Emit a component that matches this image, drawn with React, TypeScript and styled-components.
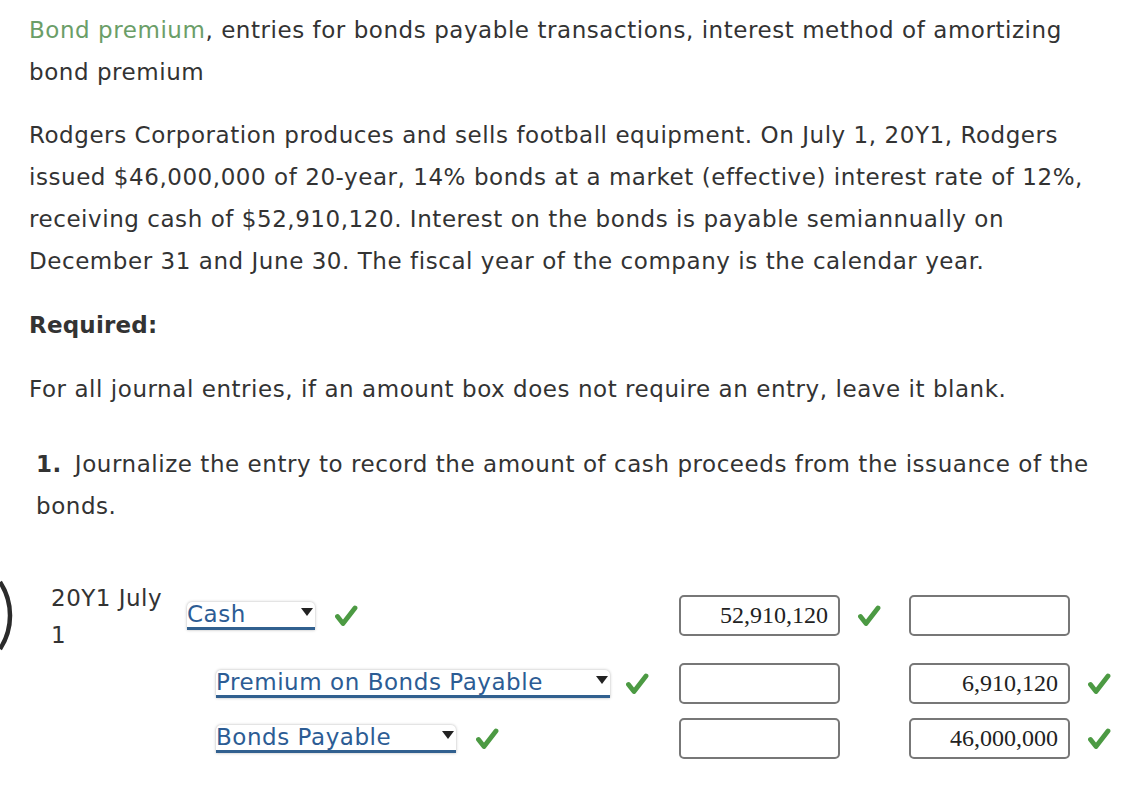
import React from "react";
import styled, { createGlobalStyle } from "styled-components";

const GlobalStyle = createGlobalStyle`
  body {
    margin: 0;
    background: #fff;
    font-family: "DejaVu Sans", Verdana, sans-serif;
    color: #333;
  }
`;

const Page = styled.div`
  padding: 9px 38px 30px 29px;
  font-size: 23px;
  letter-spacing: 0.55px;
  line-height: 42px;
`;

const Title = styled.div`
  margin: 0 0 21px;
`;

const TopicLink = styled.span`
  color: #6b9e68;
`;

const Para = styled.p<{ $mt?: number }>`
  margin: ${(p) => p.$mt ?? 22}px 0 0;
`;

const Required = styled.p`
  margin: 22px 0 0;
  font-weight: bold;
  letter-spacing: 0.2px;
`;

const Step = styled.p`
  margin: 33px 0 0;
  padding-left: 7px;

  b {
    display: inline-block;
    margin-right: 13px;
  }
`;

const Journal = styled.div`
  position: relative;
  margin-top: 68px;
  padding-left: 22px;
  display: flex;
  flex-direction: column;
`;

const Bracket = styled.svg`
  position: absolute;
  left: -29px;
  top: -17px;
`;

const Row = styled.div<{ $mt?: number }>`
  display: flex;
  align-items: flex-start;
  margin-top: ${(p) => p.$mt ?? 0}px;
`;

const DateCell = styled.div`
  width: 136px;
  flex-shrink: 0;
  line-height: 37px;
  margin-top: -15px;
  padding-right: 12px;
  box-sizing: border-box;
  letter-spacing: 0.5px;
`;

const AccountCell = styled.div<{ $indent?: number }>`
  width: 492px;
  flex-shrink: 0;
  height: 41px;
  display: flex;
  align-items: center;
  padding-left: ${(p) => p.$indent ?? 0}px;
  box-sizing: border-box;
`;

const Select = styled.div<{ $w: number }>`
  width: ${(p) => p.$w}px;
  height: 28px;
  box-sizing: border-box;
  background: #fff;
  border-radius: 5px 5px 0 0;
  box-shadow: 0 0 3px rgba(0, 0, 0, 0.3);
  border-bottom: 3px solid #31608f;
  display: flex;
  align-items: center;
  justify-content: space-between;
  color: #2c5c94;
  line-height: 25px;
  padding-right: 2px;
`;

const Arrow = styled.span`
  width: 0;
  height: 0;
  border-left: 6px solid transparent;
  border-right: 6px solid transparent;
  border-top: 8px solid #222;
  margin-top: -4px;
`;

const AmountCell = styled.div<{ $w: number }>`
  width: ${(p) => p.$w}px;
  flex-shrink: 0;
  height: 41px;
  display: flex;
  align-items: center;
`;

const Amount = styled.div`
  width: 161px;
  height: 41px;
  box-sizing: border-box;
  border: 2px solid #777;
  border-radius: 5px;
  background: #fff;
  font-family: "Liberation Serif", "Times New Roman", serif;
  font-size: 24px;
  letter-spacing: 0;
  line-height: 37px;
  text-align: right;
  padding-right: 10px;
  color: #222;
`;

const CheckWrap = styled.span<{ $ml: number }>`
  margin-left: ${(p) => p.$ml}px;
  display: inline-flex;
  width: 24px;
  height: 24px;
`;

const Check = ({ ml = 17 }: { ml?: number }) => (
  <CheckWrap $ml={ml}>
    <svg width="24" height="24" viewBox="0 0 24 24">
      <path
        d="M3.5 12.5 L9 19.5 L21 4"
        fill="none"
        stroke="#4c9a43"
        strokeWidth="4.8"
        strokeLinecap="round"
        strokeLinejoin="round"
      />
    </svg>
  </CheckWrap>
);

export default function App() {
  return (
    <>
      <GlobalStyle />
      <Page>
        <Title>
          <TopicLink>Bond premium</TopicLink>, entries for bonds payable
          transactions, interest method of amortizing bond premium
        </Title>
        <Para $mt={0}>
          Rodgers Corporation produces and sells football equipment. On July 1,
          20Y1, Rodgers issued $46,000,000 of 20-year, 14% bonds at a market
          (effective) interest rate of 12%, receiving cash of $52,910,120.
          Interest on the bonds is payable semiannually on December 31 and June
          30. The fiscal year of the company is the calendar year.
        </Para>
        <Required>Required:</Required>
        <Para>
          For all journal entries, if an amount box does not require an entry,
          leave it blank.
        </Para>
        <Step>
          <b>1.</b>Journalize the entry to record the amount of cash proceeds
          from the issuance of the bonds.
        </Step>
        <Journal>
          <Bracket width="16" height="80" viewBox="0 0 16 80">
            <path
              d="M0 4 A 61 61 0 0 1 0 71"
              fill="none"
              stroke="#2b2b2b"
              strokeWidth="4.5"
            />
          </Bracket>
          <Row>
            <DateCell>20Y1 July 1</DateCell>
            <AccountCell>
              <Select $w={128}>
                <span>Cash</span>
                <Arrow />
              </Select>
              <Check ml={19} />
            </AccountCell>
            <AmountCell $w={230}>
              <Amount>52,910,120</Amount>
              <Check />
            </AmountCell>
            <AmountCell $w={210}>
              <Amount />
            </AmountCell>
          </Row>
          <Row $mt={9}>
            <DateCell />
            <AccountCell $indent={29}>
              <Select $w={394}>
                <span>Premium on Bonds Payable</span>
                <Arrow />
              </Select>
              <Check ml={15} />
            </AccountCell>
            <AmountCell $w={230}>
              <Amount />
            </AmountCell>
            <AmountCell $w={210}>
              <Amount>6,910,120</Amount>
              <Check />
            </AmountCell>
          </Row>
          <Row $mt={14}>
            <DateCell />
            <AccountCell $indent={29}>
              <Select $w={240}>
                <span>Bonds Payable</span>
                <Arrow />
              </Select>
              <Check ml={19} />
            </AccountCell>
            <AmountCell $w={230}>
              <Amount />
            </AmountCell>
            <AmountCell $w={210}>
              <Amount>46,000,000</Amount>
              <Check />
            </AmountCell>
          </Row>
        </Journal>
      </Page>
    </>
  );
}
